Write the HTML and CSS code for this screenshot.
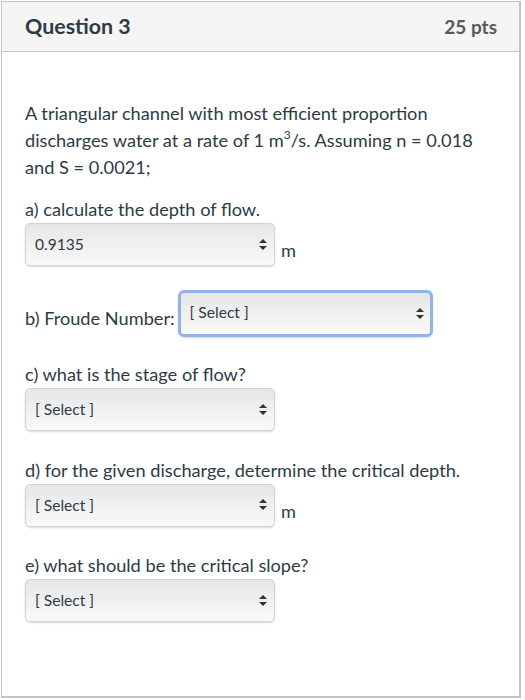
FILE: index.html
```html
<!DOCTYPE html>
<html>
<head>
<meta charset="utf-8">
<link rel="stylesheet" href="styles.css">
</head>
<body>
<div class="card">
  <div class="card-header">
    <h2 class="title">Question 3</h2>
    <span class="pts">25 pts</span>
  </div>
  <div class="card-body">
    <p class="prompt">A triangular channel with most efficient proportion discharges water at a rate of 1 m<span class="sup">3</span>/s. Assuming n = 0.018 and S = 0.0021;</p>

    <div class="part">
      <div class="label">a) calculate the depth of flow.</div>
      <div class="answer-row">
        <div class="select"><span class="select-text">0.9135</span><span class="arrows"></span></div>
        <span class="unit">m</span>
      </div>
    </div>

    <div class="part inline-part">
      <span class="label inline-label">b) Froude Number:</span>
      <div class="select focused"><span class="select-text">[ Select ]</span><span class="arrows"></span></div>
    </div>

    <div class="part spaced">
      <div class="label">c) what is the stage of flow?</div>
      <div class="answer-row">
        <div class="select"><span class="select-text">[ Select ]</span><span class="arrows"></span></div>
      </div>
    </div>

    <div class="part spaced">
      <div class="label">d) for the given discharge, determine the critical depth.</div>
      <div class="answer-row">
        <div class="select"><span class="select-text">[ Select ]</span><span class="arrows"></span></div>
        <span class="unit">m</span>
      </div>
    </div>

    <div class="part">
      <div class="label">e) what should be the critical slope?</div>
      <div class="answer-row">
        <div class="select"><span class="select-text">[ Select ]</span><span class="arrows"></span></div>
      </div>
    </div>
  </div>
</div>
</body>
</html>
```

FILE: styles.css
```css
html, body {
  margin: 0;
  padding: 0;
  background: #ffffff;
}
body {
  font-family: Lato, "Open Sans", sans-serif;
  color: #2d3b45;
}
.card {
  margin: 1px 0 0 1px;
  width: 520px;
  height: 697px;
  box-sizing: border-box;
  border: 1px solid #c4c4c4;
  border-right-width: 2px;
  border-bottom-width: 2px;
  background: #fff;
}
.card-header {
  height: 49px;
  background: #f5f5f5;
  border-bottom: 1px solid #c4c4c4;
  display: flex;
  align-items: center;
  justify-content: space-between;
  padding: 0 22px 0 23px;
}
.title {
  margin: 0;
  font-size: 21.4px;
  font-weight: 700;
  color: #2d3b45;
  position: relative;
  top: -1px;
}
.pts {
  font-size: 19px;
  font-weight: 700;
  color: #555a5e;
}
.card-body {
  padding: 48px 23px 0 23px;
}
.prompt {
  margin: 0 0 15px 0;
  font-size: 18.2px;
  line-height: 27px;
}
.sup {
  display: inline-block;
  font-size: 12px;
  line-height: 12px;
  vertical-align: 8px;
}
.label {
  font-size: 18.2px;
  line-height: 27px;
}
.part {
  margin-bottom: 24px;
}
.part.spaced {
  margin-bottom: 25.5px;
}
.answer-row {
  display: flex;
  align-items: flex-end;
  gap: 6px;
}
.select {
  position: relative;
  width: 250px;
  height: 43px;
  box-sizing: border-box;
  border: 1px solid #d3d3d3;
  border-radius: 5px;
  background: linear-gradient(to bottom, #e6e6e6 0%, #f1f1f1 55%, #f9f9f9 100%);
  box-shadow: 0 1px 2px rgba(0,0,0,0.15);
  padding: 10px 0 0 9px;
  font-size: 15.6px;
  line-height: 20px;
  color: #2d3b45;
}
.select-text {
  display: block;
}
.arrows {
  position: absolute;
  right: 7px;
  top: 50%;
  width: 8px;
  height: 11px;
  margin-top: -6px;
}
.arrows::before,
.arrows::after {
  content: "";
  position: absolute;
  left: 0;
  border-left: 4px solid transparent;
  border-right: 4px solid transparent;
}
.arrows::before {
  top: 0;
  border-bottom: 4.5px solid #333;
}
.arrows::after {
  bottom: 0;
  border-top: 4.5px solid #333;
}
.unit {
  font-size: 18.2px;
  line-height: 27px;
  padding-bottom: 2px;
}
.inline-part {
  display: flex;
  align-items: center;
  gap: 3px;
}
.inline-label {
  padding-top: 9px;
}
.select.focused {
  width: 255px;
  height: 47px;
  border: 3px solid #90b4e4;
  border-radius: 6px;
  padding: 9px 0 0 9px;
}
.select.focused .arrows {
  right: 6px;
}
```
